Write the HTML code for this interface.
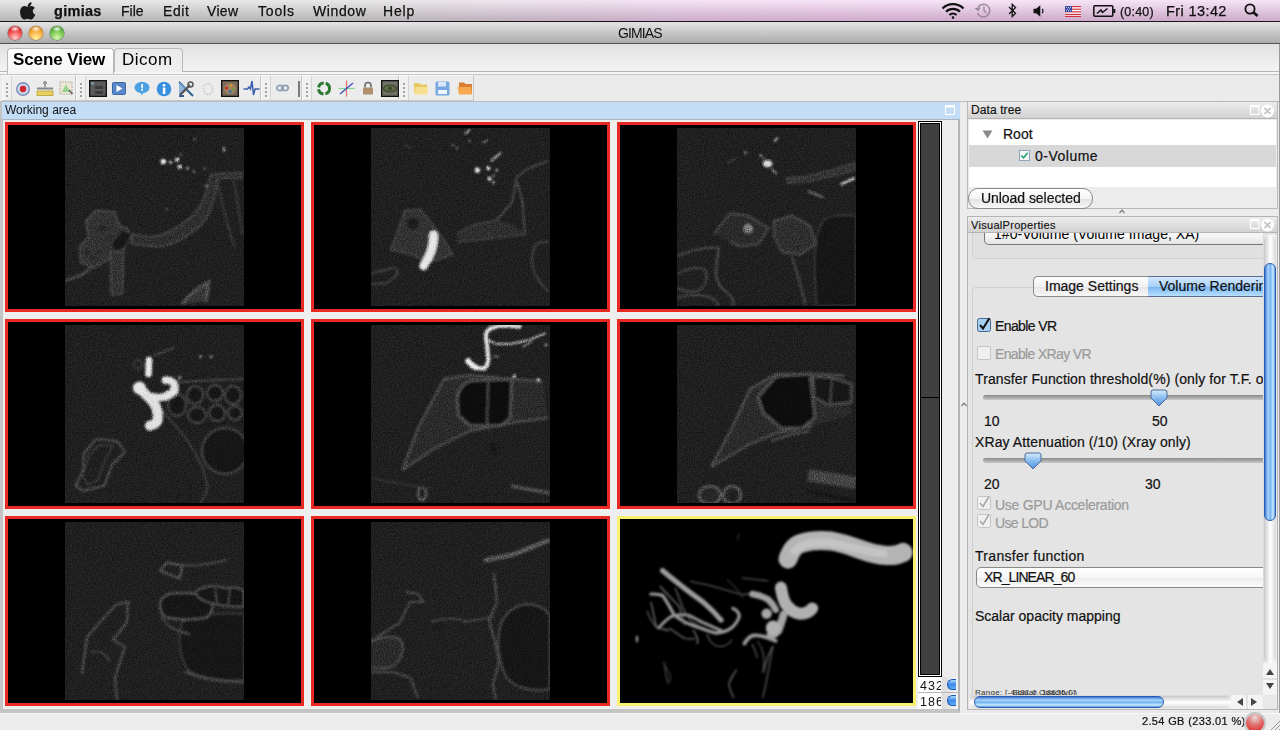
<!DOCTYPE html>
<html><head><meta charset="utf-8">
<style>
*{margin:0;padding:0;box-sizing:border-box}
html,body{width:1280px;height:730px;overflow:hidden;background:#e8e8e8;font-family:"Liberation Sans",sans-serif;color:#000}
.a{position:absolute}
#menubar{left:0;top:0;width:1280px;height:22px;background:linear-gradient(#e8e8e8,#b6b6b6);border-bottom:1px solid #1c141a}
#mbpink{left:0;top:0;width:1280px;height:21px;background:linear-gradient(#f6e4f6,#cfa9cb);-webkit-mask-image:linear-gradient(to right,transparent 0,transparent 340px,rgba(0,0,0,0.45) 520px,rgba(0,0,0,0.95) 720px,#000 900px,rgba(0,0,0,0.85) 1280px)}
.mi{position:absolute;top:3px;font-size:14px;line-height:16px;white-space:nowrap;color:#111;-webkit-text-stroke:0.25px #111}
#titlebar{left:0;top:22px;width:1280px;height:22px;background:linear-gradient(#e4e4e4,#ababab);border-bottom:1px solid #525252;border-radius:4px 4px 0 0}
.tl{position:absolute;top:4px;width:14px;height:14px;border-radius:50%}
#tabs{left:0;top:44px;width:1280px;height:28px;background:linear-gradient(#e2e2e2,#f3f3f3);border-bottom:1px solid #b6b6b6}
.tab{position:absolute;top:5px;height:24px;border:1px solid #b8b8b8;border-bottom:none;border-radius:4px 4px 0 0;font-size:17px;line-height:22px;white-space:nowrap}
#toolbar{left:0;top:74px;width:1280px;height:28px;background:#ebebeb;border-bottom:1px solid #bdbdbd;border-top:1px solid #c4c4c4}
.tg{position:absolute;top:0px;height:26px;background:#ececec;border-top:1px solid #fafafa;border-left:1px solid #fafafa;border-right:1px solid #c6c6c6;border-bottom:1px solid #c6c6c6}
.grip{position:absolute;left:0;top:0;width:9px;height:24px;background:#f0f0f0;border-right:1px solid #d4d4d4}
.grip i{position:absolute;left:3px;width:2px;height:2px;background:#a4a4a4}
.ic{position:absolute}
#waHead{left:2px;top:102px;width:958px;height:18px;background:#c4ddf6;border-bottom:1px solid #a8b4c0;font-size:12px;line-height:17px;padding-left:3px;color:#111}
.tile{position:absolute;width:299px;height:190px;background:#000;border:3px solid #ea2a22}
.ct{position:absolute;width:179px;height:178px;background:#282828;overflow:hidden}
.ct svg{display:block}
#status{left:0;top:713px;width:1280px;height:17px;background:#ececec;border-top:1px solid #fafafa}
.lbl{position:absolute;font-size:14px;line-height:15px;white-space:nowrap;color:#111;-webkit-text-stroke:0.2px currentColor}
.ph{position:absolute;height:18px;background:linear-gradient(#ececec,#d2d2d2);border-bottom:1px solid #b4b4b4;font-size:12px;line-height:17px;padding-left:4px;color:#111;-webkit-text-stroke:0.15px #111}
</style></head><body><svg width="0" height="0" style="position:absolute"><defs>
<filter id="nz" x="0" y="0" width="100%" height="100%" color-interpolation-filters="sRGB"><feTurbulence type="fractalNoise" baseFrequency="0.8" numOctaves="2" seed="3" result="t"/><feColorMatrix in="t" type="matrix" values="2.2 0 0 0 -0.6  2.2 0 0 0 -0.6  2.2 0 0 0 -0.6  0 0 0 0 1"/></filter>
<filter id="bl" x="-20%" y="-20%" width="140%" height="140%"><feGaussianBlur stdDeviation="1"/></filter>
<filter id="bl2" x="-20%" y="-20%" width="140%" height="140%"><feGaussianBlur stdDeviation="1.6"/></filter>
</defs></svg>
<!-- MENU BAR -->
<div id="menubar" class="a"><div id="mbpink" class="a"></div>
  <svg class="a" style="left:20px;top:2px" width="17" height="18" viewBox="0 0 17 18"><path d="M11.6 0.3c0.1 1.2-0.4 2.3-1.1 3.1-0.7 0.8-1.8 1.4-2.9 1.3-0.1-1.1 0.4-2.3 1.1-3 0.7-0.8 1.9-1.4 2.9-1.4zM15.4 12.6c-0.4 1-0.7 1.4-1.3 2.3-0.8 1.2-1.9 2.7-3.3 2.7-1.2 0-1.6-0.8-3.2-0.8-1.7 0-2 0.8-3.3 0.8-1.4 0-2.4-1.4-3.2-2.5C-0.1 12.1-0.4 8.4 0.9 6.400 1.800 4.9 3.2 4.1 4.600 4.1c1.400 0 2.300 0.800 3.400 0.800 1.100 0 1.800-0.800 3.400-0.800 1.200 0 2.500 0.700 3.400 1.800-3 1.600-2.500 5.900 0.600 6.700z" fill="#1a1a1a"/></svg>
  <div class="mi" style="left:54px;font-weight:bold;font-size:14.5px;letter-spacing:0.3px">gimias</div>
  <div class="mi" style="left:121px">File</div>
  <div class="mi" style="left:163px;letter-spacing:0.6px">Edit</div>
  <div class="mi" style="left:207px;letter-spacing:0.3px">View</div>
  <div class="mi" style="left:258px;letter-spacing:0.8px">Tools</div>
  <div class="mi" style="left:313px;letter-spacing:0.6px">Window</div>
  <div class="mi" style="left:383px;letter-spacing:0.8px">Help</div>
  <!-- wifi -->
  <svg class="a" style="left:941px;top:2px" width="24" height="17" viewBox="0 0 24 17"><path d="M1.5 6.5A15 15 0 0 1 22.5 6.5" stroke="#111" stroke-width="2.2" fill="none"/><path d="M5 9.8A10 10 0 0 1 19 9.8" stroke="#111" stroke-width="2.2" fill="none"/><path d="M8.4 13A5.2 5.2 0 0 1 15.6 13" stroke="#111" stroke-width="2.2" fill="none"/><circle cx="12" cy="15.6" r="1.3" fill="#111"/></svg>
  <!-- time machine -->
  <svg class="a" style="left:974px;top:3px" width="17" height="15" viewBox="0 0 17 15"><path d="M4 4.5A6.3 6.3 0 1 1 3.6 10" stroke="#9a8a98" stroke-width="1.5" fill="none"/><path d="M0.5 5l3.5 3.2L6.8 4.6z" fill="#9a8a98"/><path d="M10 3.5V7.5l2.3 2.2" stroke="#9a8a98" stroke-width="1.4" fill="none"/></svg>
  <!-- bluetooth -->
  <svg class="a" style="left:1008px;top:3px" width="9" height="15" viewBox="0 0 9 15"><path d="M1 4l6.5 6.3-3.3 3.3V1.3l3.3 3.3L1 11" stroke="#111" stroke-width="1.3" fill="none"/></svg>
  <!-- volume -->
  <svg class="a" style="left:1033px;top:5px" width="12" height="12" viewBox="0 0 12 12"><path d="M0.5 3.8h2.6L7.3 0.3v11.4L3.1 8.2H0.5z" fill="#111"/><path d="M9 4a2.5 2.5 0 0 1 0 4" stroke="#111" stroke-width="1.2" fill="none"/></svg>
  <!-- flag -->
  <svg class="a" style="left:1065px;top:6px" width="16" height="11" viewBox="0 0 16 11"><rect width="16" height="11" fill="#fff"/><rect y="0" width="16" height="1.2" fill="#d03040"/><rect y="2.6" width="16" height="1.2" fill="#d03040"/><rect y="5.2" width="16" height="1.2" fill="#d03040"/><rect y="7.8" width="16" height="1.2" fill="#d03040"/><rect y="9.8" width="16" height="1.2" fill="#d03040"/><rect width="7" height="6" fill="#3a4aa0"/><g fill="#fff"><circle cx="1.5" cy="1.3" r="0.5"/><circle cx="3.5" cy="1.3" r="0.5"/><circle cx="5.5" cy="1.3" r="0.5"/><circle cx="2.5" cy="3" r="0.5"/><circle cx="4.5" cy="3" r="0.5"/><circle cx="1.5" cy="4.7" r="0.5"/><circle cx="3.5" cy="4.7" r="0.5"/><circle cx="5.5" cy="4.7" r="0.5"/></g></svg>
  <!-- battery -->
  <svg class="a" style="left:1093px;top:5px" width="23" height="12" viewBox="0 0 23 12"><rect x="0.8" y="0.8" width="19" height="10.4" rx="1" stroke="#111" stroke-width="1.5" fill="none"/><rect x="20.3" y="4" width="2" height="4" fill="#111"/><path d="M4 8.5l4-3.5 1.5 2.5 5-4" stroke="#111" stroke-width="1.5" fill="none"/></svg>
  <div class="mi" style="left:1120px;font-size:12.5px;top:4px;letter-spacing:0.2px">(0:40)</div>
  <div class="mi" style="left:1166px;font-size:14.5px;letter-spacing:0.4px">Fri 13:42</div>
  <!-- search -->
  <svg class="a" style="left:1244px;top:3px" width="15" height="14" viewBox="0 0 15 14"><circle cx="6" cy="6" r="4.6" stroke="#111" stroke-width="1.8" fill="none"/><path d="M9.3 9.3L13.6 13" stroke="#111" stroke-width="2.6"/></svg>
</div>

<!-- TITLE BAR -->
<div id="titlebar" class="a">
  <div class="tl" style="left:8px;background:radial-gradient(ellipse 35% 22% at 50% 20%,rgba(255,255,255,0.95),rgba(255,255,255,0)),radial-gradient(circle at 50% 85%,#ffd0d0 0,#f25050 50%,#c81c1c 85%,#801010 100%);box-shadow:0 0 0 0.6px rgba(90,20,20,0.6)"></div>
  <div class="tl" style="left:29px;background:radial-gradient(ellipse 35% 22% at 50% 20%,rgba(255,255,255,0.95),rgba(255,255,255,0)),radial-gradient(circle at 50% 85%,#fff0a0 0,#f8b040 50%,#d07810 85%,#905010 100%);box-shadow:0 0 0 0.6px rgba(110,60,10,0.6)"></div>
  <div class="tl" style="left:50px;background:radial-gradient(ellipse 35% 22% at 50% 20%,rgba(255,255,255,0.95),rgba(255,255,255,0)),radial-gradient(circle at 50% 85%,#d8f8b0 0,#78c850 50%,#389020 85%,#206010 100%);box-shadow:0 0 0 0.6px rgba(30,80,20,0.6)"></div>
  <div class="a" style="left:618px;top:3px;font-size:14px;line-height:16px;letter-spacing:-0.9px;color:#111">GIMIAS</div>
</div>

<!-- TABS -->
<div id="tabs" class="a">
  <div class="tab" style="left:7px;top:4px;width:107px;background:linear-gradient(#ffffff,#f4f4f4);font-weight:bold;padding-left:5px;height:26px;z-index:2;letter-spacing:-0.1px;line-height:21px">Scene View</div>
  <div class="tab" style="left:114px;width:69px;background:linear-gradient(#eaeaea,#f0f0f0);padding-left:7px;top:4px;height:24px;letter-spacing:0.5px;line-height:21px">Dicom</div>
</div>

<!-- TOOLBAR -->
<div class="a" style="left:0;top:72px;width:1280px;height:2px;background:#f6f6f6"></div><div id="toolbar" class="a">
  <div class="tg" style="left:2px;width:74px"><div class="grip"><i style="top:7px"></i><i style="top:11px"></i><i style="top:15px"></i><i style="top:19px"></i></div></div>
  <div class="tg" style="left:76px;width:185px"><div class="grip"><i style="top:7px"></i><i style="top:11px"></i><i style="top:15px"></i><i style="top:19px"></i></div></div>
  <div class="tg" style="left:261px;width:41px"><div class="grip"><i style="top:7px"></i><i style="top:11px"></i><i style="top:15px"></i><i style="top:19px"></i></div></div>
  <div class="tg" style="left:302px;width:97px"><div class="grip"><i style="top:7px"></i><i style="top:11px"></i><i style="top:15px"></i><i style="top:19px"></i></div></div>
  <div class="tg" style="left:399px;width:75px"><div class="grip"><i style="top:7px"></i><i style="top:11px"></i><i style="top:15px"></i><i style="top:19px"></i></div></div>
  <!-- record -->
  <svg class="ic" style="left:15px;top:6px" width="16" height="16" viewBox="0 0 16 16"><circle cx="8" cy="8" r="7" fill="#7a90b8"/><circle cx="8" cy="8" r="5.6" fill="#c8d4ec"/><circle cx="8" cy="8" r="3.2" fill="#d02828"/></svg>
  <!-- ruler -->
  <svg class="ic" style="left:36px;top:6px" width="18" height="16" viewBox="0 0 18 16"><circle cx="9" cy="2" r="1.3" stroke="#666" fill="none"/><path d="M9 3.5v3" stroke="#666"/><rect x="1" y="6.5" width="16" height="2" fill="#888"/><rect x="1" y="10" width="16" height="4.5" fill="#e8d060" stroke="#b8a030" stroke-width="0.8"/></svg>
  <!-- select -->
  <svg class="ic" style="left:59px;top:6px" width="15" height="15" viewBox="0 0 15 15"><rect x="1" y="1" width="12" height="12" fill="#eee8d8" stroke="#a09878" stroke-width="1" stroke-dasharray="1.2 1.2"/><path d="M7 3L11 11H3z" fill="#98d090"/><path d="M10 9l3.5 4" stroke="#606060" stroke-width="1.6"/></svg>
  <!-- dark box -->
  <svg class="ic" style="left:89px;top:5px" width="18" height="17" viewBox="0 0 18 17"><rect x="0.5" y="0.5" width="17" height="16" fill="#5a5a5a" stroke="#111" stroke-width="1.6"/><circle cx="3.5" cy="3.5" r="1.3" fill="#8ab"/><rect x="6" y="6" width="8" height="3" fill="#3a3a3a"/><rect x="6" y="11" width="8" height="3" fill="#3a3a3a"/></svg>
  <!-- play -->
  <svg class="ic" style="left:112px;top:7px" width="14" height="13" viewBox="0 0 14 13"><rect x="0.5" y="0.5" width="13" height="12" rx="1" fill="#5888c8" stroke="#3a68a8"/><path d="M4.5 3v7l6-3.5z" fill="#fff"/></svg>
  <!-- bubble -->
  <svg class="ic" style="left:134px;top:6px" width="16" height="15" viewBox="0 0 16 15"><ellipse cx="8" cy="6.5" rx="7.5" ry="5.8" fill="#4aa0e0"/><path d="M6 11l2 3.5 1.5-3.5z" fill="#4aa0e0"/><rect x="7.3" y="3" width="1.6" height="4.5" fill="#fff"/><circle cx="8.1" cy="9" r="0.9" fill="#fff"/></svg>
  <!-- info -->
  <svg class="ic" style="left:156px;top:6px" width="16" height="16" viewBox="0 0 16 16"><circle cx="8" cy="8" r="7.3" fill="#3a90e0"/><circle cx="8" cy="4.3" r="1.3" fill="#fff"/><rect x="6.8" y="6.5" width="2.6" height="6.5" fill="#fff"/></svg>
  <!-- tools -->
  <svg class="ic" style="left:178px;top:6px" width="16" height="16" viewBox="0 0 16 16"><path d="M1 1L15 15M1 15h5" stroke="#305c90" stroke-width="2"/><path d="M1 1v14l9-7z" fill="#7aa8d8" opacity="0.8"/><path d="M2 14L12 4" stroke="#555" stroke-width="2.4"/><circle cx="12.5" cy="3.5" r="2.5" stroke="#555" stroke-width="1.5" fill="none"/></svg>
  <!-- gear -->
  <svg class="ic" style="left:202px;top:7px" width="12" height="14" viewBox="0 0 12 14"><ellipse cx="6" cy="7" rx="4.5" ry="5.5" stroke="#c8c8c8" stroke-width="1.4" stroke-dasharray="1.5 1" fill="none"/></svg>
  <!-- palette -->
  <svg class="ic" style="left:221px;top:5px" width="18" height="17" viewBox="0 0 18 17"><rect x="0.6" y="0.6" width="16.8" height="15.8" fill="#7a6a5a" stroke="#111" stroke-width="1.4"/><ellipse cx="9" cy="8.5" rx="6" ry="5.5" fill="#a08060"/><circle cx="5.5" cy="8" r="1.6" fill="#c83020"/><circle cx="9" cy="11.5" r="1.5" fill="#3070b0"/><circle cx="12" cy="9" r="1.3" fill="#60a040"/><circle cx="10" cy="5.5" r="1.2" fill="#d0a020"/></svg>
  <!-- heartbeat -->
  <svg class="ic" style="left:243px;top:5px" width="17" height="17" viewBox="0 0 17 17"><path d="M0.5 9h4l1.5-2 1.5 2 1.5-8 1.5 14 1.5-6h4.5" stroke="#3a60b0" stroke-width="1.5" fill="none"/></svg>
  <!-- link -->
  <svg class="ic" style="left:276px;top:8px" width="13" height="10" viewBox="0 0 13 10"><ellipse cx="4" cy="5" rx="3.3" ry="2.6" stroke="#90a0b8" stroke-width="1.8" fill="none"/><ellipse cx="9" cy="5" rx="3.3" ry="2.6" stroke="#90a0b8" stroke-width="1.8" fill="none"/></svg>
  <div class="ic" style="left:298px;top:6px;width:2px;height:16px;background:#7a7a7a"></div>
  <!-- recycle -->
  <svg class="ic" style="left:316px;top:6px" width="16" height="15" viewBox="0 0 16 15"><circle cx="8" cy="7.5" r="5.5" stroke="#2a7a30" stroke-width="3" fill="none" stroke-dasharray="7 2"/></svg>
  <!-- crosshair -->
  <svg class="ic" style="left:338px;top:5px" width="17" height="17" viewBox="0 0 17 17"><path d="M8.5 0.5v16" stroke="#e07070" stroke-width="1.2"/><path d="M0.5 8.5h16" stroke="#80d890" stroke-width="1.2"/><path d="M2 14L15 3" stroke="#4050c0" stroke-width="1.3"/></svg>
  <!-- lock -->
  <svg class="ic" style="left:362px;top:6px" width="12" height="14" viewBox="0 0 12 14"><path d="M3 6.5V4.5a3 3 0 0 1 6 0v2" stroke="#6a6a6a" stroke-width="1.6" fill="none"/><rect x="1" y="6.5" width="10" height="7" rx="1" fill="#b09070"/></svg>
  <!-- eye -->
  <svg class="ic" style="left:381px;top:5px" width="18" height="17" viewBox="0 0 18 17"><rect x="0.6" y="0.6" width="16.8" height="15.8" fill="#707068" stroke="#111" stroke-width="1.4"/><ellipse cx="9" cy="8.5" rx="6.5" ry="3.5" stroke="#3a4a20" stroke-width="1.2" fill="#606850"/><circle cx="9" cy="8.5" r="2" fill="#3a4a20"/></svg>
  <!-- folder -->
  <svg class="ic" style="left:413px;top:6px" width="16" height="15" viewBox="0 0 16 15"><path d="M1 2h5l1.5 1.5H14V13H1z" fill="#e8c860"/><path d="M2.5 6H15.5L14 13.5H1z" fill="#f8e090"/></svg>
  <!-- save -->
  <svg class="ic" style="left:435px;top:6px" width="15" height="15" viewBox="0 0 15 15"><rect x="0.5" y="0.5" width="14" height="14" rx="1.5" fill="#78a8e0"/><rect x="3" y="1" width="8" height="4.5" fill="#d8e8f8"/><rect x="3" y="9" width="9" height="4" fill="#f0f6ff"/></svg>
  <!-- orange folder -->
  <svg class="ic" style="left:457px;top:6px" width="16" height="15" viewBox="0 0 16 15"><path d="M2 1.5h5l1.5 1.5H15V13H2z" fill="#d88030"/><path d="M0.5 6H14L15 13.5H2z" fill="#f8a850"/></svg>
</div>

<!-- WORKING AREA -->
<div class="a" style="left:2px;top:120px;width:956px;height:589px;background:#eeeeee"></div>
<div id="waHead" class="a">Working area
  <svg class="a" style="left:943px;top:3px" width="10" height="10" viewBox="0 0 10 10"><rect x="0.5" y="0.5" width="9" height="9" stroke="#fff" fill="none"/><rect x="0.5" y="0.5" width="9" height="2" fill="#fff"/></svg>
</div>

<div class="tile" style="left:5px;top:122px"></div>
<div class="tile" style="left:311px;top:122px"></div>
<div class="tile" style="left:617px;top:122px"></div>
<div class="tile" style="left:5px;top:319px"></div>
<div class="tile" style="left:311px;top:319px"></div>
<div class="tile" style="left:617px;top:319px"></div>
<div class="tile" style="left:5px;top:516px"></div>
<div class="tile" style="left:311px;top:516px"></div>
<div class="tile" style="left:617px;top:516px;border-color:#f8f070"></div>

<!--CTSTART-->
<div class="ct" style="left:65px;top:128px"><svg width="179" height="178" viewBox="0 0 179 178"><rect width="179" height="178" fill="#1f1f1f"/><g filter="url(#bl)">
<path d="M66.6 105.9C75 107 82 109 88.7 108.5C97 107 104 104 109.5 100.7C116 96 121 93 125 90.3C130 85 133 81 135.5 77.3C139 70 141 66 142 61.7C144 55 145 51 146 46C155 45 165 45 177.2 44.8L177.2 50C168 50 160 50 152 51C152 60 150 70 147 77.3C145 85 140 93 135.5 98.1C128 104 122 108 117.3 111.1C108 116 100 118 93.9 118.9C85 118 75 117 66.6 116.3z" fill="#2e2e2e" stroke="#4a4a4a" stroke-width="1.5"/>
<path d="M152 51C158 80 163 100 170 120" stroke="#3a3a3a" stroke-width="2" fill="none"/>
<path d="M21 93L31.4 82.5L49.7 83.8L54.9 98.1L62.7 100.7L65.3 108.5L54.9 129.3L41.9 132L28.8 139.8L15.8 134.6L14.5 119L23.6 108.5z" fill="#333" stroke="#4a4a4a" stroke-width="1.8"/>
<circle cx="38" cy="100" r="3.5" fill="#262626"/><circle cx="45" cy="110" r="3" fill="#2a2a2a"/><circle cx="22" cy="124" r="2.5" fill="#222"/><circle cx="28" cy="130" r="2.2" fill="#222"/><circle cx="33" cy="124" r="2" fill="#222"/>
<path d="M47 116.3L57.5 103.3L66.6 105.9L60 119L51 122.8z" fill="#141414"/>
<path d="M45.8 124L58.8 124L57.5 165.8L45.8 167z" fill="#333" stroke="#4a4a4a" stroke-width="1.5"/>
<path d="M0 152.8C5 151 10 149 15.8 147.6C20 145 23 142 26.2 139.8" stroke="#4a4a4a" stroke-width="3" fill="none"/>
<path d="M117.3 176C122 170 128 164 133 160.6C137 158 140 156 143.4 154C143 162 142 168 140.8 173.6" stroke="#505050" stroke-width="3.5" fill="#353535"/>
<path d="M168 48C172 70 175 90 178 108" stroke="#323232" stroke-width="3" fill="none"/>
<circle cx="98.3" cy="33.6" r="2.7" fill="#eee"/><circle cx="105.6" cy="34.3" r="1.5" fill="#ccc"/><circle cx="112.1" cy="31.7" r="2.1" fill="#e4e4e4"/><circle cx="114.7" cy="38.8" r="2.1" fill="#e4e4e4"/><circle cx="122.5" cy="40.3" r="1.3" fill="#bbb"/><circle cx="129" cy="43.5" r="1.1" fill="#aaa"/><circle cx="139.5" cy="40.8" r="1" fill="#999"/><circle cx="140.8" cy="57.8" r="1" fill="#aaa"/><circle cx="101.7" cy="81.2" r="0.9" fill="#888"/><circle cx="116" cy="26.5" r="1" fill="#999"/><circle cx="129.8" cy="11" r="1" fill="#999"/>
<ellipse cx="159" cy="21.3" rx="1" ry="2.5" fill="#ccc"/>
</g><rect width="179" height="178" fill="#fff" filter="url(#nz)" opacity="0.35" style="mix-blend-mode:overlay"/></svg></div>
<div class="ct" style="left:371px;top:128px"><svg width="179" height="178" viewBox="0 0 179 178"><rect width="179" height="178" fill="#1f1f1f"/><g filter="url(#bl)">
<path d="M19.7 121.5L34 82.5L49.7 81.2L70.5 108.5L82.2 126.8L57.5 134.6L41.9 126.8z" fill="#303030" stroke="#4a4a4a" stroke-width="1.5"/>
<circle cx="41.9" cy="95.5" r="5.7" fill="#1c1c1c"/>
<path d="M62.5 107C63 118 58 130 52.5 138" stroke="#e6e6e6" stroke-width="8.5" stroke-linecap="round" fill="none"/>
<path d="M86 106L104.3 96.8L125.1 92.9L140.8 74.7L146 48.7L156.4 40.8L177.2 33" stroke="#4a4a4a" stroke-width="2" fill="none"/>
<path d="M86 113.7L112.1 111.1L153.8 106L151.2 72L146 53.9" stroke="#4a4a4a" stroke-width="2" fill="none"/>
<path d="M86 106L104.3 96.8L125.1 92.9L140 95L153.8 106L112.1 111.1L86 113.7z" fill="#2e2e2e"/>
<path d="M177.2 113.7C170 114 166 115 164.2 116.3C161 125 160 132 161.6 139.8C165 150 170 157 177.2 163.2" stroke="#444" stroke-width="2" fill="none"/>
<path d="M0 145C10 144 18 140 23.4 139.8C28 142 30 146 16 155C10 156 5 156 0 156" stroke="#444" stroke-width="2" fill="none"/>
<circle cx="106.4" cy="42.2" r="2.6" fill="#e8e8e8"/><circle cx="117.3" cy="40.3" r="2" fill="#e0e0e0"/><circle cx="125.7" cy="42.2" r="1.3" fill="#bbb"/><circle cx="118.6" cy="50.7" r="2" fill="#e4e4e4"/><circle cx="122.5" cy="54.4" r="1.3" fill="#bbb"/><circle cx="122.5" cy="47.4" r="1.1" fill="#aaa"/><circle cx="82" cy="17" r="1" fill="#aaa"/><circle cx="86" cy="20" r="1" fill="#aaa"/>
<path d="M93.9 5.7L99.1 1.8" stroke="#ccc" stroke-width="1.6"/><path d="M119.9 33L130.3 24.7" stroke="#ccc" stroke-width="1.6"/><path d="M111 15L117 12" stroke="#999" stroke-width="1.2"/><path d="M34 17L40 20" stroke="#666" stroke-width="1"/><path d="M98 14L99 12" stroke="#aaa" stroke-width="1.2"/>
</g><rect width="179" height="178" fill="#fff" filter="url(#nz)" opacity="0.35" style="mix-blend-mode:overlay"/></svg></div>
<div class="ct" style="left:677px;top:128px"><svg width="179" height="178" viewBox="0 0 179 178"><rect width="179" height="178" fill="#1f1f1f"/><g filter="url(#bl)">
<path d="M146 93C150 88 165 86 179 88V178H140C138 160 137 140 138 124C139 110 141 100 146 93z" fill="#131313" stroke="#3a3a3a" stroke-width="1.5"/>
<path d="M97 93L115.3 87.7L133.5 98.1L138.8 116.3L123.1 126.7L104.9 124.1L97 108.5z" stroke="#4a4a4a" stroke-width="2" fill="#2e2e2e"/>
<path d="M110.1 50L128.3 48.7L154.4 42.2L177.8 34.3L177.8 42.2L154.4 48.7L128.3 53.9L110.1 55.2z" fill="#303030" stroke="#4a4a4a" stroke-width="1.3"/>
<path d="M163.5 56.5L177.8 50" stroke="#ddd" stroke-width="2"/>
<path d="M131 63L146.6 69.5" stroke="#888" stroke-width="1.5"/>
<path d="M37 106L53 85L71 87.7L92 100L81.5 116L63 118.5L53 114" stroke="#4a4a4a" stroke-width="2" fill="#2c2c2c"/>
<circle cx="71.1" cy="100.7" r="4.7" fill="#7a7a7a"/>
<path d="M0 128C15 122 30 118 42 120C40 135 35 150 45 160C55 168 58 174 56 178" stroke="#4c4c4c" stroke-width="2.2" fill="none"/>
<path d="M0 146C10 140 22 138 28 142C32 150 28 160 20 163C12 165 5 162 0 160" stroke="#4a4a4a" stroke-width="2" fill="none"/>
<path d="M0 170C10 166 25 166 35 170C40 174 42 178 42 178" stroke="#484848" stroke-width="2" fill="none"/>
<path d="M115 129C120 145 125 160 128 176" stroke="#444" stroke-width="2.5" fill="none"/>
<ellipse cx="90.6" cy="35.6" rx="4.7" ry="3.6" fill="#dcdcdc"/>
<circle cx="84" cy="27.8" r="1.3" fill="#bbb"/><circle cx="68.5" cy="24.7" r="1.2" fill="#aaa"/><circle cx="87" cy="31" r="1" fill="#aaa"/>
<path d="M97 13.5L101 9.6" stroke="#ccc" stroke-width="1.6"/><path d="M94.5 40.8L99.7 46" stroke="#aaa" stroke-width="1.4"/><path d="M50 35L60 30" stroke="#555" stroke-width="1"/>
</g><rect width="179" height="178" fill="#fff" filter="url(#nz)" opacity="0.35" style="mix-blend-mode:overlay"/></svg></div>
<div class="ct" style="left:65px;top:325px"><svg width="179" height="178" viewBox="0 0 179 178"><rect width="179" height="178" fill="#1f1f1f"/><g filter="url(#bl)">
<path d="M99 62L140 55L177.2 58L177.2 95L140 100L104 100z" fill="#1c1c1c"/>
<ellipse cx="112" cy="80" rx="9" ry="11" fill="#141414" stroke="#474747" stroke-width="1.8"/>
<ellipse cx="130" cy="70" rx="8" ry="9" fill="#161616" stroke="#474747" stroke-width="1.8"/>
<ellipse cx="132" cy="90" rx="9" ry="8" fill="#141414" stroke="#474747" stroke-width="1.8"/>
<ellipse cx="150" cy="68" rx="8" ry="8" fill="#181818" stroke="#474747" stroke-width="1.8"/>
<ellipse cx="152" cy="88" rx="8" ry="8" fill="#141414" stroke="#474747" stroke-width="1.8"/>
<ellipse cx="168" cy="70" rx="8" ry="9" fill="#161616" stroke="#474747" stroke-width="1.8"/>
<ellipse cx="170" cy="88" rx="7" ry="7" fill="#181818" stroke="#474747" stroke-width="1.8"/>
<path d="M100 58C120 56 150 55 179 54" stroke="#4a4a4a" stroke-width="1.8" fill="none"/>
<circle cx="160" cy="126" r="23" fill="#121212" stroke="#454545" stroke-width="2"/>
<path d="M92 80C110 100 130 120 140 150C145 165 140 172 135 178" stroke="#3e3e3e" stroke-width="2" fill="none"/>
<path d="M18.4 129.3L31.4 113.7L52.3 116.3L60 126.8L47 139.8L39.2 160.6L18.4 165.8L10.6 160.6L18.4 145z" stroke="#4a4a4a" stroke-width="2.5" fill="none"/><path d="M24 130L34 120L48 121L40 135L33 155L22 160L18 150z" stroke="#404040" stroke-width="1.5" fill="none"/>
<circle cx="73" cy="39.5" r="4.5" stroke="#5a5a5a" stroke-width="1" fill="none"/>
<path d="M84 35L83.5 49" stroke="#eaeaea" stroke-width="6.5" stroke-linecap="round"/>
<path d="M74.4 63C78 67 81 70 83.5 72C87 76 90 79 91.3 82.5C93 88 93 92 92.6 95.5C91 99 88 100 84.8 100.7" stroke="#e0e0e0" stroke-width="10" stroke-linecap="round" fill="none"/>
<circle cx="74.4" cy="63" r="6.5" fill="#e6e6e6"/>
<path d="M88.7 72C92 72.5 96 72.5 99.1 72C104 70 108 68 109.5 65.6C110 61 109 58 107 56.5C105 55.5 102 55 100.4 55.2" stroke="#e2e2e2" stroke-width="7.5" stroke-linecap="round" fill="none"/>
<circle cx="135.5" cy="31.7" r="1.2" fill="#bbb"/><circle cx="146" cy="31.7" r="1.2" fill="#bbb"/><circle cx="114.7" cy="52.6" r="1.3" fill="#ccc"/>
<path d="M88.7 30.4L109.5 22.6" stroke="#777" stroke-width="1"/>
</g><rect width="179" height="178" fill="#fff" filter="url(#nz)" opacity="0.35" style="mix-blend-mode:overlay"/></svg></div>
<div class="ct" style="left:371px;top:325px"><svg width="179" height="178" viewBox="0 0 179 178"><rect width="179" height="178" fill="#1f1f1f"/><g filter="url(#bl)">
<path d="M31.4 145L47 103L73 53.9L99 50L140.8 53.9L172 56.5L177 93L140.8 98L99 106L62.7 124z" fill="#2b2b2b"/>
<path d="M86.1 72C88 62 96 55 104.3 55.2L140.8 53.9L139.5 92.9L130.3 100.7L99.1 100.7L87.4 90.3z" fill="#0f0f0f" stroke="#4c4c4c" stroke-width="3"/>
<path d="M117.3 56L116 100" stroke="#454545" stroke-width="2.2"/>
<path d="M31.4 145L47 103L73 53.9L99 50L140.8 53.9L172 56.5" stroke="#4a4a4a" stroke-width="2.5" fill="none"/>
<path d="M31.4 145L62.7 124L99 106L140.8 98L177.2 93" stroke="#4a4a4a" stroke-width="2.5" fill="none"/>
<path d="M96.5 35.6C99 39 101 41 104.3 42.2C108 43.5 111 43.8 113.4 43.5C116 41 117 38 117.3 35.6C117 30 116.5 25 116 20C115.5 16 114.8 12 114.7 9.6C116 6 118 4 120 3.1C126 1 131 0.5 135.5 0.5C140 0.8 145 1.3 148.6 1.8" stroke="#e4e4e4" stroke-width="4" stroke-linecap="round" fill="none"/>
<path d="M97 36C99.5 39 102 41.5 105 42.5" stroke="#eee" stroke-width="5.5" stroke-linecap="round" fill="none"/>
<path d="M117.3 14.8C120 16.5 122 18 125 18.7C130 19 135 19 140.8 18.7C147 17.5 153 16 159 14.8C165 12 170 10 174.6 8.3" stroke="#cfcfcf" stroke-width="1.6" fill="none"/>
<path d="M151 22L161 17" stroke="#aaa" stroke-width="1.2"/><path d="M122 31L128 32" stroke="#aaa" stroke-width="1.2"/>
<circle cx="143.4" cy="50.7" r="1.5" fill="#ddd"/><circle cx="167.3" cy="54.4" r="1.5" fill="#ddd"/><circle cx="175" cy="20" r="1.2" fill="#ccc"/>
<ellipse cx="51" cy="168.4" rx="4" ry="6.5" stroke="#5c5c5c" stroke-width="2.5" fill="none"/>
<path d="M140 161C155 164 168 166 179 168" stroke="#505050" stroke-width="3.5" fill="none"/>
<path d="M0 153C20 158 40 160 60 163" stroke="#333" stroke-width="2" fill="none"/>
<ellipse cx="123" cy="124" rx="4" ry="5" fill="#161616"/>
</g><rect width="179" height="178" fill="#fff" filter="url(#nz)" opacity="0.35" style="mix-blend-mode:overlay"/></svg></div>
<div class="ct" style="left:677px;top:325px"><svg width="179" height="178" viewBox="0 0 179 178"><rect width="179" height="178" fill="#1f1f1f"/><g filter="url(#bl)">
<path d="M34 142L55 103L73 64L99 49L140 49L167 50.5L175 90L135.5 101L99 108.5L73 119z" fill="#2b2b2b"/>
<path d="M80.9 72L99.1 51.3L133 48.7L138.2 92.9L125.1 103.3L104.3 103.3L86.1 87.7z" fill="#0f0f0f" stroke="#4c4c4c" stroke-width="3"/>
<path d="M136 51.3L153.8 52.6L174.6 59L174.6 77.3L151.2 80L137 72z" fill="#141414" stroke="#484848" stroke-width="2.5"/>
<path d="M155 53L153 80" stroke="#444" stroke-width="2"/>
<path d="M34 142L55 103L73 64L99 49L140 49L167 50.5" stroke="#4a4a4a" stroke-width="2.5" fill="none"/>
<path d="M34 142L73 119L99 108.5L135.5 101" stroke="#4a4a4a" stroke-width="2.5" fill="none"/>
<path d="M94 116L112 110L133 106" stroke="#4a4a4a" stroke-width="2.5" fill="none"/>
<ellipse cx="33" cy="170" rx="11" ry="9" fill="#262626" stroke="#595959" stroke-width="2.5"/>
<ellipse cx="55" cy="170" rx="9" ry="9" fill="#262626" stroke="#595959" stroke-width="2.5"/><ellipse cx="56" cy="171" rx="3" ry="5" fill="#1a1a1a"/>
<path d="M131 150C150 153 165 156 179 158" stroke="#454545" stroke-width="12" fill="none"/>
<path d="M130 166L177 176" stroke="#151515" stroke-width="3" fill="none"/>
</g><rect width="179" height="178" fill="#fff" filter="url(#nz)" opacity="0.35" style="mix-blend-mode:overlay"/></svg></div>
<div class="ct" style="left:65px;top:522px"><svg width="179" height="178" viewBox="0 0 179 178"><rect width="179" height="178" fill="#1f1f1f"/><g filter="url(#bl)">
<path d="M117 100C130 92 160 90 179 92V158C160 160 140 158 125 150C115 140 112 115 117 100z" fill="#191919" stroke="#3c3c3c" stroke-width="1.5"/>
<path d="M95 82C96 74 104 70 115 71C125 70 135 72 145 76C150 82 148 92 140 96C125 98 110 98 100 95C96 92 95 88 95 82z" fill="#121212" stroke="#555" stroke-width="2"/>
<path d="M130 70C138 64 150 62 160 66C170 64 177 66 179 70V84C170 86 160 84 150 82C140 80 132 76 130 70z" fill="#141414" stroke="#505050" stroke-width="2"/>
<path d="M150 66L152 82M165 66L163 84" stroke="#4a4a4a" stroke-width="1.5"/>
<path d="M95.2 48.7L101.7 40.8L117.3 43.5L114.7 56.5z" stroke="#555" stroke-width="2.2" fill="none"/>
<path d="M117.3 43.5C130 44 145 42 161.6 38" stroke="#4a4a4a" stroke-width="2" fill="none"/>
<path d="M96.5 95C102 104 112 110 125 112" stroke="#4a4a4a" stroke-width="2" fill="none"/>
<path d="M17 152L22 115L35 100L52 82L63 80L62 100L48 118L60 125L55 140L50 155L52 178" stroke="#4a4a4a" stroke-width="2.4" fill="none"/>
<path d="M25 130C35 128 42 132 45 140" stroke="#404040" stroke-width="2" fill="none"/>
<path d="M120 150C140 158 160 160 179 160" stroke="#4a4a4a" stroke-width="2.5" fill="none"/>
</g><rect width="179" height="178" fill="#fff" filter="url(#nz)" opacity="0.35" style="mix-blend-mode:overlay"/></svg></div>
<div class="ct" style="left:371px;top:522px"><svg width="179" height="178" viewBox="0 0 179 178"><rect width="179" height="178" fill="#1f1f1f"/><g filter="url(#bl)">
<path d="M128 110C130 95 140 84 155 82C168 82 177 88 179 95V167C165 170 145 168 135 155C128 140 126 125 128 110z" fill="#131313" stroke="#4a4a4a" stroke-width="1.8"/>
<path d="M114.7 38.2C125 36 133 34.5 140.8 33C155 28 168 22 177.2 18.7" stroke="#5a5a5a" stroke-width="4.5" stroke-linecap="round" fill="none"/>
<path d="M34 69.5L47 72L52.3 79.9L39.2 79.9L28.8 100.7L8 113.7L0.2 119" stroke="#4a4a4a" stroke-width="2.2" fill="none"/>
<path d="M0 120C10 115 20 112 30 118C35 130 30 140 20 145C12 148 5 146 0 145" stroke="#4a4a4a" stroke-width="2.2" fill="#2a2a2a"/>
<path d="M0.2 150.2L21 150.2L39.2 155.4L47 176.2" stroke="#4a4a4a" stroke-width="2.2" fill="none"/>
<path d="M60 100C70 96 85 95 95 100C105 98 115 96 123 95" stroke="#444" stroke-width="2" fill="none"/>
<path d="M123 51L126 80L118 98L124 120L128 140L122 163L125 178" stroke="#4a4a4a" stroke-width="2.4" fill="none"/>
<path d="M62 106L72 104" stroke="#1a1a1a" stroke-width="3"/>
</g><rect width="179" height="178" fill="#fff" filter="url(#nz)" opacity="0.35" style="mix-blend-mode:overlay"/></svg></div>
<svg class="a" style="left:620px;top:519px" width="293" height="184" viewBox="3 3 293 184"><defs><linearGradient id="tb" x1="0" y1="0" x2="0" y2="1"><stop offset="0" stop-color="#909090"/><stop offset="0.45" stop-color="#c4c4c4"/><stop offset="1" stop-color="#8a8a8a"/></linearGradient></defs><g filter="url(#bl)">
<path d="M171 43C174 34 178 29 184 27.3C195 24 205 24 214 25C225 27 234 30 242 33C250 36 260 39 270 39.5C278 40 283 38 286.2 36.4" stroke="#b4b4b4" stroke-width="19" stroke-linecap="round" fill="none"/>
<path d="M176 38C180 31 186 28 195 27C205 26 215 27 225 29C240 33 255 37 270 37.5" stroke="#cacaca" stroke-width="8" fill="none" opacity="0.7"/>
<path d="M163.9 71.6C165 78 166 84 169.1 88.5C173 94 177 96.5 182.1 97.6C187 98 192 96 195.2 92.4" stroke="#b0b0b0" stroke-width="12" stroke-linecap="round" fill="none"/>
<path d="M166.5 98.9C165 105 163 110 161.3 114.5C159 117 156 119 153.5 119.7" stroke="#a4a4a4" stroke-width="8" stroke-linecap="round" fill="none"/>
<circle cx="149.6" cy="97.6" r="5.2" fill="#a8a8a8"/><circle cx="156.1" cy="111.9" r="7.3" fill="#b0b0b0"/>
<path d="M135.3 78C141 79 147 81 150.9 83.3C154 86 157 90 158.7 93.7" stroke="#a0a0a0" stroke-width="6.5" stroke-linecap="round" fill="none"/>
<path d="M127.5 127.5C130 123 132 121 135.3 119.7C140 119 145 120 148.3 121C152 122 155 123.5 158.7 124.9" stroke="#9a9a9a" stroke-width="3.8" stroke-linecap="round" fill="none"/>
<path d="M45.5 54.6C52 60 58 65 65 70.3C72 76 79 81 85.9 85.9C93 92 99 98 104.1 104.1" stroke="#9c9c9c" stroke-width="5.2" stroke-linecap="round" fill="none"/>
<path d="M33.8 78C38 78 42 78.5 45.5 79.4C50 85 53 92 57.2 98.9C63 104 69 107 75.5 109.3C83 112 91 115 98.9 117.1C105 117 110 115 114.5 111.9C118 109 121 105 122.3 100.2C122 97 120 94 115.8 92.4" stroke="#9a9a9a" stroke-width="3.2" stroke-linecap="round" fill="none"/>
<path d="M41.6 111.9C45 108 50 103 54.6 100.2C60 99 65 98.5 70.3 98.9C76 101 81 104 85.9 106.7C92 109 98 112 104.1 114.5" stroke="#959595" stroke-width="3" stroke-linecap="round" fill="none"/>
<path d="M34 86C36 95 38 105 39 110C42 112 48 114 52 114.5" stroke="#777" stroke-width="1.3" fill="none"/>
<path d="M43 70C50 78 58 86 62.5 91C65 100 66 105 67.7 109" stroke="#777" stroke-width="1.3" fill="none"/>
<path d="M52 112C58 116 63 120 68 122.5C72 123 76 123 78 122.3" stroke="#777" stroke-width="1.2" fill="none"/>
<path d="M73 65C80 67 86 68 87 68C95 70 103 72 122 78C127 78.5 130 78 133 78" stroke="#6a6a6a" stroke-width="1.1" fill="none"/>
<path d="M125 62C135 63 143 64 151 65" stroke="#666" stroke-width="1.1" fill="none"/>
<path d="M156 130C150 140 148 150 146 157" stroke="#777" stroke-width="1.1" fill="none"/>
<path d="M140.5 125C145 132 149 140 146 156" stroke="#666" stroke-width="1" fill="none"/>
<path d="M156 130C152 150 150 165 145.7 182" stroke="#6a6a6a" stroke-width="1.1" fill="none"/>
<path d="M119.7 153.5C115 160 112 167 111.9 169C113 175 116 180 117 182" stroke="#777" stroke-width="1.2" fill="none"/>
<path d="M46.8 145.7C48 152 49 158 50 164.5C51 167 52 168 52 168" stroke="#666" stroke-width="1" fill="none"/>
<path d="M30 95C32 100 36 108 40 112" stroke="#6a6a6a" stroke-width="1.1" fill="none"/>
<path d="M58 72C62 80 64 90 70 100C74 106 80 110 88 112" stroke="#707070" stroke-width="1.2" fill="none"/>
<path d="M90 118C92 124 94 128 100 130C108 132 112 128 115 124" stroke="#6a6a6a" stroke-width="1.1" fill="none"/>
<path d="M76 114C80 120 82 124 80 128" stroke="#777" stroke-width="1.3" fill="none"/>
<path d="M110 64C118 70 122 76 126 82" stroke="#5a5a5a" stroke-width="1" fill="none"/>
<path d="M135 128C138 134 140 138 140 142" stroke="#666" stroke-width="1.1" fill="none"/>
<path d="M48 150C52 156 55 160 52 166" stroke="#555" stroke-width="1" fill="none"/>
<ellipse cx="20" cy="123" rx="1.2" ry="3.5" fill="#999"/>
<path d="M122 18L120 24" stroke="#444" stroke-width="1"/>
</g></svg>
<!--CTEND-->

<!-- slider column -->
<div class="a" style="left:942px;top:120px;width:16px;height:591px;background:#ececec"></div>
<div class="a" style="left:918px;top:121px;width:24px;height:556px;background:#404040;border:1px solid #000;box-shadow:inset 0 0 0 1px #fff, inset 0 0 0 2px #000"></div>
<div class="a" style="left:921px;top:397px;width:19px;height:1px;background:#000"></div>
<div class="a" style="left:918px;top:677px;width:40px;height:16px;background:linear-gradient(to right,#fff 0,#fff 23px,#dcdcdc 24px,#f4f4f4 40px);border-bottom:1px solid #b8b8b8"></div>
<div class="a" style="left:918px;top:693px;width:40px;height:16px;background:linear-gradient(to right,#fff 0,#fff 23px,#dcdcdc 24px,#f4f4f4 40px)"></div>
<div class="a" style="left:920px;top:679px;width:21px;height:14px;overflow:hidden;font-size:12.5px;line-height:14px;letter-spacing:1px;white-space:nowrap;color:#111">432</div>
<div class="a" style="left:920px;top:695px;width:21px;height:14px;overflow:hidden;font-size:12.5px;line-height:14px;letter-spacing:1px;white-space:nowrap;color:#111">186</div>
<div class="a" style="left:947px;top:679px;width:9px;height:11px;border-radius:6px 0 0 6px;background:linear-gradient(#a8d8ff,#3a8ae8 50%,#60b0f8);border:1.5px solid #1a5ab8;border-right:none"></div>
<div class="a" style="left:947px;top:695px;width:9px;height:11px;border-radius:6px 0 0 6px;background:linear-gradient(#a8d8ff,#3a8ae8 50%,#60b0f8);border:1.5px solid #1a5ab8;border-right:none"></div>
<div class="a" style="left:0px;top:709px;width:960px;height:4px;background:#c4c4c4"></div>
<div class="a" style="left:0px;top:120px;width:3px;height:591px;background:#c4c4c4"></div><div class="a" style="left:0px;top:102px;width:2px;height:18px;background:#c4c4c4"></div>
<!-- splitter -->
<div class="a" style="left:958px;top:120px;width:2px;height:591px;background:#b4b4b4"></div>
<div class="a" style="left:960px;top:102px;width:320px;height:609px;background:#ececec"></div>
<svg class="a" style="left:961px;top:402px" width="6" height="5" viewBox="0 0 6 5"><path d="M0.5 4L3 1.2 5.5 4" stroke="#777" stroke-width="1.2" fill="none"/></svg>

<!-- DATA TREE PANEL -->
<div class="a" style="left:967px;top:101px;width:311px;height:108px;border:1px solid #b8b8b8;background:#ececec"></div>
<div class="ph" style="left:968px;top:102px;height:17px;width:309px;letter-spacing:0.1px;padding-left:3px">Data tree</div>
<svg class="a" style="left:1249px;top:104px" width="26" height="14" viewBox="0 0 26 14"><rect x="1.5" y="1.5" width="8.5" height="9" stroke="#fff" stroke-width="1.2" fill="none"/><rect x="1.5" y="1.5" width="8.5" height="1.8" fill="#fff"/><circle cx="18.5" cy="7" r="6.5" fill="#fff"/><path d="M15.5 4l6 6M21.5 4l-6 6" stroke="#c8c8c8" stroke-width="1.8"/></svg>
<div class="a" style="left:969px;top:120px;width:307px;height:67px;background:#fff"></div>
<div class="a" style="left:969px;top:145px;width:307px;height:22px;background:#d8d8d8"></div>
<svg class="a" style="left:982px;top:130px" width="11" height="9" viewBox="0 0 11 9"><path d="M0.5 0.5h10L5.5 8.5z" fill="#8a8a8a"/></svg>
<div class="lbl" style="left:1003px;top:127px;letter-spacing:0px">Root</div>
<svg class="a" style="left:1019px;top:150px" width="11" height="11" viewBox="0 0 12 12"><rect x="0.5" y="0.5" width="11" height="11" fill="#f4f8fc" stroke="#8aa0b8"/><path d="M2.5 6l2.5 2.5L9.5 3" stroke="#20a060" stroke-width="1.6" fill="none"/></svg>
<div class="lbl" style="left:1035px;top:149px;letter-spacing:0.5px">0-Volume</div>
<div class="a" style="left:968px;top:188px;width:125px;height:21px;border:1px solid #8a8a8a;border-radius:10px;background:linear-gradient(#ffffff 0%,#f4f4f4 50%,#e2e2e2 51%,#f8f8f8 100%)"></div>
<div class="lbl" style="left:981px;top:191px;letter-spacing:-0.05px">Unload selected</div>
<svg class="a" style="left:1119px;top:209px" width="6" height="5" viewBox="0 0 6 5"><path d="M0.5 4L3 1.2 5.5 4" stroke="#777" stroke-width="1.2" fill="none"/></svg>

<!-- VISUAL PROPERTIES PANEL -->
<div class="a" style="left:967px;top:216px;width:311px;height:494px;border:1px solid #b4b4b4;background:#e4e4e4"></div>
<div class="a" style="left:969px;top:233px;width:294px;height:462px;background:#e4e4e4;overflow:hidden">
  <div class="a" style="left:3px;top:-20px;width:300px;height:46px;border:1px solid #cfcfcf;border-radius:4px;background:#e0e0e0"></div>
  <div class="a" style="left:15px;top:-8px;width:290px;height:20px;border:1px solid #777;border-top:none;border-radius:0 0 5px 5px;background:linear-gradient(#ffffff,#f4f4f4 60%,#e4e4e4);font-size:14px;line-height:19px;padding-left:9px;white-space:nowrap;letter-spacing:0.05px">1#0-Volume (Volume Image, XA)</div>
  <div class="a" style="left:3px;top:54px;width:300px;height:420px;border:1px solid #cfcfcf;border-radius:4px;background:#e4e4e4"></div>
  <div class="a" style="left:64px;top:43px;width:116px;height:21px;border:1px solid #8a8a8a;border-right:none;border-radius:5px 0 0 5px;background:linear-gradient(#fdfdfd,#f0f0f0 50%,#e6e6e6 51%,#f6f6f6)"></div>
  <div class="lbl" style="left:76px;top:46px;letter-spacing:0px">Image Settings</div>
  <div class="a" style="left:179px;top:43px;width:130px;height:21px;border:1px solid #5a6a90;border-left:none;background:linear-gradient(#d4e8fc,#a8d0f8 50%,#78b4f0 51%,#b8e0ff)"></div>
  <div class="lbl" style="left:190px;top:46px;letter-spacing:0px">Volume Rendering</div>

  <svg class="a" style="left:8px;top:85px" width="14" height="14" viewBox="0 0 14 14"><rect x="0.5" y="0.5" width="13" height="13" rx="2" fill="#a8d0f4" stroke="#4a6a90"/><path d="M3 7l3 3.5L12.5 0" stroke="#111" stroke-width="2" fill="none"/></svg>
  <div class="lbl" style="left:26px;top:86px;letter-spacing:-0.6px">Enable VR</div>
  <div class="a" style="left:8px;top:113px;width:14px;height:14px;border:1px solid #c4c4c4;border-radius:2px;background:#f0f0f0"></div>
  <div class="lbl" style="left:26px;top:114px;color:#9a9a9a;letter-spacing:-0.65px">Enable XRay VR</div>
  <div class="lbl" style="left:6px;top:139px;letter-spacing:0.1px">Transfer Function threshold(%) (only for T.F. o</div>
  <div class="a" style="left:14px;top:162px;width:290px;height:5px;border-radius:3px;background:linear-gradient(#8a8a8a,#c8c8c8);"></div>
  <svg class="a" style="left:181px;top:156px" width="18" height="18" viewBox="0 0 18 18"><path d="M1 3a2 2 0 0 1 2-2h12a2 2 0 0 1 2 2v6l-8 8-8-8z" fill="url(#thb)" stroke="#4a6a98" stroke-width="1"/><defs><linearGradient id="thb" x1="0" y1="0" x2="0" y2="1"><stop offset="0" stop-color="#d8ecff"/><stop offset="0.5" stop-color="#88bcf0"/><stop offset="1" stop-color="#5090e0"/></linearGradient></defs></svg>
  <div class="lbl" style="left:15px;top:181px">10</div>
  <div class="lbl" style="left:183px;top:181px">50</div>
  <div class="lbl" style="left:6px;top:202px;letter-spacing:0.1px">XRay Attenuation (/10) (Xray only)</div>
  <div class="a" style="left:14px;top:225px;width:290px;height:5px;border-radius:3px;background:linear-gradient(#8a8a8a,#c8c8c8);"></div>
  <svg class="a" style="left:55px;top:219px" width="18" height="18" viewBox="0 0 18 18"><path d="M1 3a2 2 0 0 1 2-2h12a2 2 0 0 1 2 2v6l-8 8-8-8z" fill="url(#thb)" stroke="#4a6a98" stroke-width="1"/></svg>
  <div class="lbl" style="left:15px;top:244px">20</div>
  <div class="lbl" style="left:176px;top:244px">30</div>
  <svg class="a" style="left:8px;top:263px" width="14" height="14" viewBox="0 0 14 14"><rect x="0.5" y="0.5" width="13" height="13" rx="2" fill="#f0f0f0" stroke="#c4c4c4"/><path d="M3 7l3 3.5L12 0.5" stroke="#a8a8a8" stroke-width="1.6" fill="none"/></svg>
  <div class="lbl" style="left:26px;top:265px;color:#9a9a9a;letter-spacing:-0.27px">Use GPU Acceleration</div>
  <svg class="a" style="left:8px;top:281px" width="14" height="14" viewBox="0 0 14 14"><rect x="0.5" y="0.5" width="13" height="13" rx="2" fill="#f0f0f0" stroke="#c4c4c4"/><path d="M3 7l3 3.5L12 0.5" stroke="#a8a8a8" stroke-width="1.6" fill="none"/></svg>
  <div class="lbl" style="left:26px;top:283px;color:#9a9a9a;letter-spacing:-0.65px">Use LOD</div>
  <div class="lbl" style="left:6px;top:316px;letter-spacing:0.3px">Transfer function</div>
  <div class="a" style="left:7px;top:334px;width:300px;height:21px;border:1px solid #888;border-radius:5px;background:linear-gradient(#ffffff,#f6f6f6 50%,#ececec 51%,#fafafa)"></div>
  <div class="lbl" style="left:15px;top:337px;letter-spacing:-0.9px">XR_LINEAR_60</div>
  <div class="lbl" style="left:6px;top:376px;letter-spacing:0px">Scalar opacity mapping</div>
  <div class="a" style="left:6px;top:455px;font-size:8px;line-height:9px;white-space:nowrap;color:#333;letter-spacing:0.3px">Range: [-4981.0, 18636.0]</div>
  <div class="a" style="left:43px;top:455px;font-size:8px;line-height:9px;white-space:nowrap;color:#333;letter-spacing:0.3px">Scalar Opacity(-)</div>
</div>
<div class="ph" style="left:968px;top:217px;width:309px;height:16px;letter-spacing:0.3px;line-height:17px;font-size:11px;padding-left:3px">VisualProperties</div>
<svg class="a" style="left:1249px;top:218px" width="26" height="14" viewBox="0 0 26 14"><rect x="1.5" y="1.5" width="8.5" height="9" stroke="#fff" stroke-width="1.2" fill="none"/><rect x="1.5" y="1.5" width="8.5" height="1.8" fill="#fff"/><circle cx="18.5" cy="7" r="6.5" fill="#fff"/><path d="M15.5 4l6 6M21.5 4l-6 6" stroke="#c8c8c8" stroke-width="1.8"/></svg>
<!-- vertical scrollbar -->
<div class="a" style="left:1263px;top:235px;width:14px;height:460px;background:linear-gradient(to right,#d8d8d8,#fafafa 40%,#ffffff 60%,#e8e8e8)"></div>
<div class="a" style="left:1264px;top:235px;width:12px;height:428px;border-radius:6px;background:linear-gradient(to right,#c8c8c8,#f8f8f8 45%,#ffffff 55%,#d8d8d8)"></div>
<div class="a" style="left:1264px;top:263px;width:12px;height:258px;border-radius:6px;border:1px solid #2a5ab0;background:linear-gradient(to right,#3a78d8,#a8d4fc 30%,#78b4f4 55%,#c8ecff 80%,#5a98e0)"></div>
<svg class="a" style="left:1263px;top:663px" width="14" height="32" viewBox="0 0 14 32"><rect width="14" height="32" fill="#f4f4f4"/><path d="M0 16h14" stroke="#d0d0d0"/><path d="M3 12L7 6l4 6z" fill="#444"/><path d="M3 20l4 6 4-6z" fill="#444"/></svg>
<!-- horizontal scrollbar -->
<div class="a" style="left:969px;top:695px;width:294px;height:14px;background:linear-gradient(#d8d8d8,#fafafa 40%,#ffffff 60%,#e8e8e8)"></div>
<div class="a" style="left:969px;top:696px;width:262px;height:12px;border-radius:6px;background:linear-gradient(#c8c8c8,#f8f8f8 45%,#ffffff 55%,#d8d8d8)"></div>
<div class="a" style="left:974px;top:696px;width:190px;height:12px;border-radius:6px;border:1px solid #2a5ab0;background:linear-gradient(#3a78d8,#a8d4fc 30%,#78b4f4 55%,#c8ecff 80%,#5a98e0)"></div>
<svg class="a" style="left:1231px;top:695px" width="32" height="14" viewBox="0 0 32 14"><rect width="32" height="14" fill="#f4f4f4"/><path d="M16 0v14" stroke="#d0d0d0"/><path d="M12 3L6 7l6 4z" fill="#444"/><path d="M20 3l6 4-6 4z" fill="#444"/></svg>
<div class="a" style="left:1263px;top:695px;width:14px;height:14px;background:#e8e8e8"></div>


<div class="a" style="left:1279px;top:44px;width:1px;height:669px;background:#9a9a9a"></div>
<!-- STATUS -->
<div id="status" class="a">
  <div class="a" style="left:1142px;top:1px;font-size:11px;line-height:13px;letter-spacing:0.35px;color:#111;-webkit-text-stroke:0.2px #111">2.54 GB (233.01 %)</div>
  <div class="a" style="left:1246px;top:0px;width:18px;height:18px;border-radius:50%;background:radial-gradient(circle at 50% 20%,#e8dada 0,#e07070 45%,#e03838 80%,#c82020 100%);box-shadow:0 0 0 2px #c4c4c4"></div>
  <svg class="a" style="left:1266px;top:5px" width="14" height="14" viewBox="0 0 14 14"><path d="M2 14L14 2M6 14L14 6M10 14L14 10" stroke="#999" stroke-width="1"/></svg>
</div>
</body></html>
